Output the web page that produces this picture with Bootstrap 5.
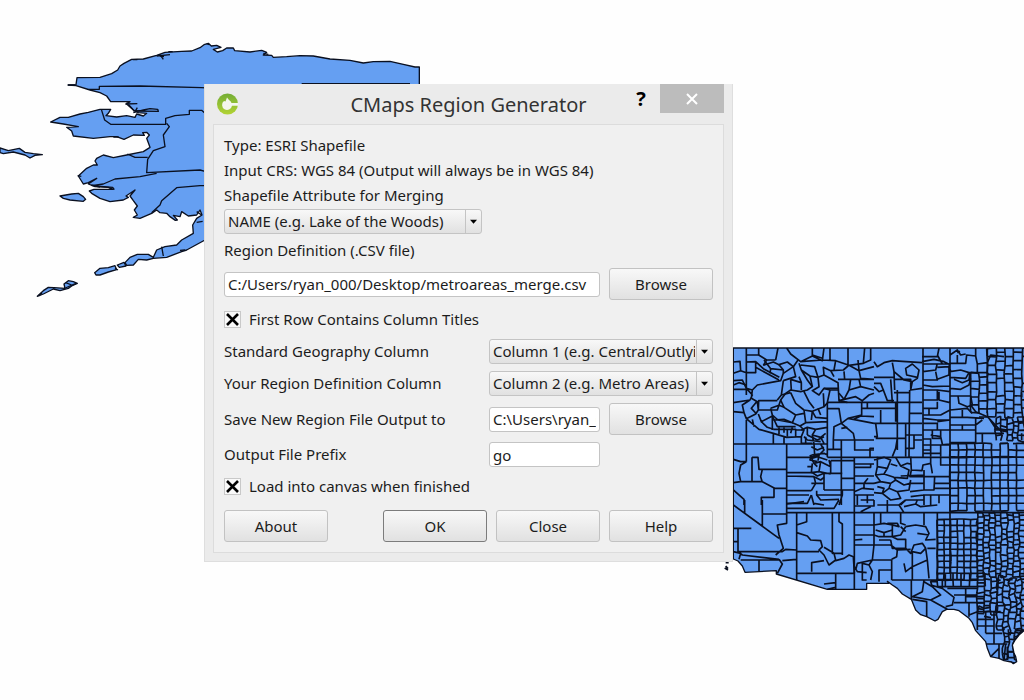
<!DOCTYPE html>
<html lang="en">
<head>
<meta charset="utf-8">
<meta name="viewport" content="width=device-width, initial-scale=1">
<title>CMaps Region Generator</title>
<link href="https://cdn.jsdelivr.net/npm/bootstrap@5.3.0/dist/css/bootstrap.min.css" rel="stylesheet">
<style>
  body { font: 15px/25px "Noto Sans", sans-serif; color: #1c1c1c; background: #fefefe; }
  .desktop { min-height: 100vh; }
  .map-canvas { inset: 0; width: 100%; height: 100%; }
  .map-canvas path { stroke: #0a1020; stroke-width: 4; stroke-linejoin: round; }
  .map-canvas .inland path { stroke-width: 5; }
  .land { fill: #659ff2; }
  .borders path { fill: none; }
  .dialog-window { left: 204px; top: 84px; width: 529px; padding: 0 8px 8px; background: #ebebeb; border: 1px solid #dedede; border-top: 0; }
  .title-side { width: 112px; }
  .title-bar { height: 40px; }
  .title-bar h1 { font: 20px/42px "Noto Sans", sans-serif; color: #333; }
  .help-btn { width: 38px; height: 29px; background: none; border: 0; font: bold 20px/29px "Noto Sans", sans-serif; }
  .close-btn { width: 64px; height: 29px; background: #bcbcbc; border: 0; }
  .dialog-panel { padding: 8px 10px 10px; background: #f0f0f0; border: 1px solid #dcdcdc; }
  .form-rows { display: grid; grid-template-columns: minmax(0, 1fr) 111px 104px; gap: 7px 9px; align-items: center; margin-top: 5px; }
  .span-2 { grid-column: span 2; }
  .span-3 { grid-column: 1 / -1; }
  .button-set { gap: 9px; }
  .btn-qt { width: 104px; height: 32px; padding: 0; font-size: 15px; line-height: 30px; color: #1c1c1c; border: 1px solid #c2c2c2; border-radius: 3px; background: linear-gradient(#f8f8f8, #e1e1e1); }
  .btn-qt.is-default { border-color: #7c7c7c; }
  .field { height: 25px; padding: 0 3px; font-size: 15px; line-height: 23px; color: #1c1c1c; border: 1px solid #c4c4c4; border-radius: 3px; min-height: 0; }
  select.field { padding-right: 17px; background: url("data:image/svg+xml,%3Csvg xmlns='http://www.w3.org/2000/svg' width='16' height='24'%3E%3Cpath d='M.5 0v24' stroke='%23c4c4c4'/%3E%3Cpath d='M5 10h7l-3.500 4z' fill='%23000'/%3E%3C/svg%3E") right center no-repeat, linear-gradient(#f8f8f8, #e1e1e1); }
  .attribute-select { width: 258px; margin: 1px 0 4px; }
  .tick { appearance: none; width: 17px; height: 17px; border: 1px solid #c9c9c9; background: #f9f9f9; }
  .tick:checked { background: #f9f9f9 url("data:image/svg+xml,%3Csvg xmlns='http://www.w3.org/2000/svg' viewBox='0 0 15 15'%3E%3Cpath d='M2 2l11 11M13 2L2 13' stroke='%23000' stroke-width='2.600'/%3E%3C/svg%3E"); }
</style>
</head>
<body>
<main class="desktop position-relative overflow-hidden">
  <svg class="map-canvas position-absolute" viewBox="0 0 1024 700" preserveAspectRatio="xMinYMin slice" aria-hidden="true">
    <defs>
      <path id="states" d="M28,24H910V868L900,872 885,885 872,902 865,915 870,940 875,950 878,965 868,971 862,966 840,962 825,955 800,950 790,925 785,905 755,872 745,848 735,835 705,812 690,808 668,808 655,815 642,838 633,843 608,830 590,824 575,810 562,778 535,762 520,745 505,735 490,724 495,730 428,730V748H310L157,702V692L63,697 55,678 42,663 28,657Z"/>
      <clipPath id="states-clip"><use href="#states"/></clipPath>
    </defs>
    <!-- Alaska -->
    <g transform="translate(0 30) scale(.333333)">
      <path class="land" d="M204,165L228,164 231,143 300,142 335,131 353,120 360,108 372,100 395,88 430,87 470,76 495,67 545,64 575,63 600,53 612,44 625,40 634,48 650,46 663,52 640,58 652,66 668,62 680,54 700,54 704,62 750,66 785,61 800,67 790,75 815,76 820,82 860,80 900,77 940,78 990,87 1050,91 1090,99 1120,95 1170,94 1210,103 1245,111 1258,111V170H700V600L615,630 560,660 545,665 500,682 460,685 440,690 415,688 400,705 380,706 375,698 390,682 412,673 445,673 460,682 470,660 495,650 530,645 545,630 580,610 578,585 590,565 606,555 600,540 590,555 565,558 545,545 540,560 520,556 532,570 526,571 510,560 500,550 480,548 470,540 455,550 420,565 400,562 412,555 403,540 412,528 400,512 390,498 405,480 378,498 385,502 370,510 330,515 300,505 275,490 268,483 282,478 340,478 325,472 285,470 265,462 290,445 265,458 250,462 235,438 260,415 280,405 292,405 285,393 290,385 310,375 340,383 380,375 430,365 450,352 440,325 448,315 440,307 428,308 433,316 400,315 372,328 350,320 330,320 280,325 220,318 215,303 200,292 235,290 190,282 152,276 180,262 205,262 240,252 265,247 300,238 332,238 325,250 318,257 350,261 380,257 405,262 410,252 430,258 440,250 415,248 400,240 380,222 390,215 332,215 320,198 300,188 270,180 228,167Z"/>
      <path class="land" d="M0,354L25,362 58,355 75,367 100,371 127,374 105,376 90,384 75,375 40,366 10,371 0,368ZM180,498L215,492 235,490 250,500 257,508 250,514 210,510 190,505ZM284,728L300,715 325,713 345,707 350,719 325,726 300,735 288,735ZM352,705L372,697 378,708 358,712ZM112,799L130,782 145,772 162,773 195,775 192,762 205,752 220,755 232,760 215,768 205,775 180,782 160,777 130,792Z"/>
      <g class="borders">
        <path d="M204,165H225M266,178H298V169L420,168 605,173 640,175M304,238L314,270 332,283H497V265L525,257 568,253V241H605L615,250M500,280L508,290 490,315 495,350 460,362 443,388 440,428 600,420 615,424M443,382H405L382,372M275,467L310,462 345,447 420,440 470,430M455,548L480,525 485,512 530,473 600,467H620M485,650L490,678M470,78L510,74M480,74L490,88M376,222L412,221M380,217L405,245 412,233M400,248L430,240 450,236 473,238 475,244 400,243M285,468L338,472 343,479M590,577L608,574M905,161H1230"/>
        <path stroke-width="7" d="M340,321H356M398,89H412M480,78L492,80M505,65H518M405,243L420,242M196,774L228,760M345,715L354,720M540,661L555,660M233,437L244,439M274,465L300,471M620,41L628,44M790,70L805,73M590,545L605,555M116,797L126,789M197,758L215,765"/>
      </g>
    </g>
    <!-- Lower 48 -->
    <g class="inland" transform="translate(724 340) scale(.333333)">
      <use class="land" href="#states"/>
      <path fill="none" d="M5,668L14,668M5,678L12,686M2,684L12,690"/>
      <g class="borders" clip-path="url(#states-clip)">
        <path d="M67,24V165M28,66L48,64 50,92 67,98M67,45H104V24M67,66L95,65 118,86 166,112M67,98H95V64M95,82L165,120M28,122L55,120 67,145 85,150 100,135 170,122 178,100 208,80 190,66 165,74 148,66 118,76M162,24L155,60M188,24L200,42 230,65 265,48 295,62 300,24M230,65L295,60 335,62 375,76 418,70 422,24M318,24V60M265,24V45L295,55M372,24V78L358,90 320,92M375,76L405,92 410,115 450,118M405,92L450,80M28,148H70L85,165 78,180 28,188M85,150L82,175 100,185 103,210H160L170,180 185,160 200,150 230,155 250,150 265,140 250,120 232,90 225,70M178,122L172,165 160,180M200,118L202,150M200,118L232,128V150M103,210L104,182H160M208,80L215,110 178,122M232,90L258,108 282,112 272,80 230,75M282,112L300,105 342,128 345,182 360,178 375,150 380,118H450M342,118H380M320,92L330,110M360,94L362,118M375,150L410,140 450,150M410,140L405,118M300,105L298,82 320,92M282,112L285,140 265,152 285,165 300,145H342M345,182L395,170 415,182 435,165 450,160M28,215L60,218 67,236 95,222 103,210M60,218L55,195 78,180M98,185L82,205 98,222M67,236L105,268 148,280 188,292 232,290 240,270 228,258 245,248 310,245M67,240V365M140,205L145,225 162,240 205,248 215,225 240,220M140,205L165,196 180,202 215,225M200,158L215,190 240,210 265,214 300,200 298,160M240,155L255,185 270,205M103,222L112,245 145,228V270M85,238L90,260M148,268H215V290M148,280V312M165,262V282M180,262V278M205,262L200,280M148,240L180,238 205,248M180,310V292M232,290V310H265M240,210L245,248M265,214L275,232 310,235M28,312H310M310,187V352M310,187H594M310,205L345,206 352,250 330,260 328,300H450M328,300V328H352M352,300V495M413,187V225L372,235 352,250 388,280 392,300M372,235L450,250M390,238L410,228 450,230M310,328H328M310,352H680M438,352V325H450M188,312V520M188,352H258L285,345 300,330 290,312M28,358L50,365 67,365M67,365L50,375 45,400 50,425 28,428M50,425H115L152,445H188M84,352V427M84,352H102L105,388H188M115,388L110,410 115,427M188,398H265L280,408 300,400H355M188,408L270,410M188,452H262M188,465H255M258,345L270,370 290,365 320,380 315,360M265,370L262,398M290,365L285,395 320,402M320,362H391M320,362V400M391,352V748M352,415H391M300,402V450M300,450H391M262,452L275,430 270,410M278,452V465H355V450M275,430H300M391,372H450M391,382H440V372M391,408H450M391,430H420L432,415M391,455L415,445 450,448M391,465H450M420,445V430H450M28,450L60,478V495M112,495V472H150V445M188,490H250L262,465M355,465L345,495M400,495V465M410,480H450M430,465V490M232,270L250,262 275,268 265,285 290,292 305,280M250,262V285M275,268L310,262M265,285L270,312M240,290L250,300 290,305M290,292L300,310M262,345L300,340 310,345M265,355L280,350 310,360M270,370L280,380"/>
        <path d="M104,45L128,60 155,60M128,60L118,76M208,80L222,60M28,100L50,92M28,135L45,128 67,135M172,165L200,158M180,202L170,180M225,110L232,128M258,108L265,140M335,62L330,90M300,145L318,150 310,187M318,150L342,150M360,178L345,160M120,60L140,86 178,90M140,86L138,100M165,74L178,90 178,100M282,205L290,225M265,214L262,240M300,200L312,187M112,245L130,262 148,268M145,228L160,260H215M190,268V290M205,248L228,258M215,270L240,270M245,290V312M250,285L280,300 300,290M262,320L280,330 300,322M270,312L272,345M262,345L258,360 280,365M285,345L282,362M250,380H265M262,398L285,395M270,410L290,420 300,412M262,430H275M262,465L270,495M278,465L290,480 345,478M270,490L300,495M392,300V330H450M413,205H450M430,205V187M352,265L370,262M345,182L370,187M418,70L440,60V24M405,92L402,60"/>
        <path d="M597,24V352M520,150V330M557,150L555,352M594,65L630,58 660,65 680,75M450,65L460,80 480,68 505,62 535,64 594,68M505,68L510,95 540,120 565,125 580,115 585,90 565,72 545,85 548,105 580,112M510,95L512,150M512,118H560V150M510,158H555M565,125L560,150 594,145M450,112H510M450,130L470,130 478,150 465,155 450,140M478,150L490,182H510M500,118L505,187M450,205H515M470,210V250H450M450,250H594M515,187V245M557,220H594M455,250L460,290H450M455,295H545M520,250V295L515,325 505,350M545,250V350M545,285H594M570,285V325H545M570,300H594M594,50H640L645,24M640,45L655,72H675L680,95M597,72H655M597,95L635,90 640,70M597,120H640L635,95M640,82L675,80V105L640,118M597,135L625,140 678,138M597,150H640L678,155M597,180H640V150M597,205H640V185M645,155V180L678,188M678,24V700M597,225H650L678,210M615,205V225M597,235L640,240H678M597,250H640V270M640,245L678,240M597,270H678M625,270V295H650V270M597,297H620V350M597,315H678M620,285L650,290 655,312M650,315V350M597,340H650M597,330H620M645,315L678,312M678,45L700,30 710,45 725,42M678,70H725L728,45 755,48V24M700,45V70M755,48L760,72 790,68M678,95L710,90 735,98 725,115 680,112M690,118L715,128 735,120 738,98M678,145L710,148 735,135 740,115M678,168H740L745,195 730,200 705,190 702,168M740,195L755,215 790,230 830,272 850,275M678,210L730,205 745,220M678,232H730L780,235M715,205V235M678,255H755L775,240M755,235V275M678,270H755V308H678M715,255V268M755,280H840M775,280V308M795,235L815,265 850,270M790,68L800,45 840,50M790,24V50M735,98H790V68M760,72V98M450,360L480,352 500,360 490,385 460,380V350M460,380L455,405 480,402 510,412 550,415 555,390 530,378 515,352M455,405L470,425 500,430 495,445 520,455 555,450 560,420M450,430L470,425M495,445L475,460 450,458M520,455L530,475 500,480 475,460M560,350L562,390 594,392 597,375 620,370V352M562,390L558,410H680M530,408L600,405M555,430H600V450L558,455M600,450H630L632,410M560,470L600,465V495M600,390V440M620,370L625,400M650,352V375H680M632,430H680M632,445H680M597,465H680M620,465V495M645,465V490M545,480H600M530,495L545,480M480,402L490,385M500,430L515,420 510,412M515,420L540,435 558,430M460,440L480,445 475,460M520,378L500,372M530,378L550,370 560,372"/>
        <g transform="translate(0 480)">
          <path d="M188,38H900M640,38V240M188,38V70L160,75 165,105 178,145 155,165M28,15L165,115M115,0V78M115,42H188M62,0V38M28,85H82M42,85V155H175L185,148 218,150M28,125H42M28,155L50,160 45,178M50,180H165M42,155L55,165 165,178M105,182V213M165,178L175,192 160,220M175,182L218,178M218,40V240M218,75L248,65V38M218,98L250,108 260,120 290,122 295,140 285,150 300,165 315,195 335,180 330,160 300,142M218,155H285M218,220H335V268M263,215V188L300,182M335,220H391M335,182L360,175 375,165 388,170 391,220M355,165V72L345,65V38M325,38V160H355M188,25H330L345,0M188,12L240,5M300,252L335,248M310,268L335,262M391,75H450M391,105H450L465,110H505M391,120L415,118M391,135H450V38M450,75L480,70 505,75 525,80 520,70 490,70M505,75V110L520,118H545V145L505,145 500,120M450,135H500L520,150 518,170 503,178M450,135L445,180 400,190 395,210M445,180L435,195 415,190V240H428M391,200L400,215 428,218M435,195L445,215 440,240M445,180H503V240M503,210H465V245M545,80L575,75 605,80 615,100 605,120 635,118M545,80L530,105 505,110M580,100L615,105M600,38V75M530,38V70L545,75M545,145L560,160 570,135 595,130 605,145 590,160 565,155V240M520,150L560,148M605,145L610,180 565,200M635,145H610M610,180L615,235M565,200L545,215 540,190M503,240H640M562,240V298M600,240L595,275 565,290 620,300 670,328M565,298L608,305V350M600,245L625,260 650,285 620,300M620,255L655,265 690,292 685,315 665,320M625,260L620,245H640M655,265V240M670,265H760M690,285H760M690,308H725V265M725,290H780M725,308H780M735,308V350M735,345L760,335 765,318 780,325 800,322M760,335V390M785,335V400M810,335V360M760,358H810M760,378H810M760,335H830M810,360V430M785,400H835M785,432H850M825,432V480M800,470L825,445M845,432L840,480M850,455H870M850,440V480M391,18H450V0M410,35L440,20M460,15H525L540,38M490,0V35M525,15L545,0M540,20L575,12 590,20 640,15M575,12L580,0M470,38V70M455,90L480,98 505,90M480,98V110M465,120H500M545,95L530,80"/>
        </g>
        <path id="counties"/>
        <path d="M902,868L884,886 866,920 873,950M893,160V172M893,280V300M700,38L708,34M897,868L880,888 866,912"/>
      </g>
    </g>
  </svg>

  <section class="dialog-window position-absolute" role="dialog" aria-labelledby="dialog-title">
    <header class="title-bar d-flex">
      <div class="title-side d-flex align-items-center ps-1">
        <svg width="21" height="22" viewBox="0 0 21 22" aria-hidden="true">
          <defs><linearGradient id="leaf" x2="0" y2="1"><stop stop-color="#74ad35"/><stop offset="1" stop-color="#b2d334"/></linearGradient></defs>
          <circle cx="10.500" cy="11" r="10.500" fill="url(#leaf)"/>
          <path fill="#f4f6ec" d="M10,4.500L12,7A5,5 0 0 1 14.500,10H21V12.800H15A5,5 0 1 1 7,8L8.500,8.500Z"/>
        </svg>
      </div>
      <h1 id="dialog-title" class="flex-grow-1 text-center m-0 text-nowrap">CMaps Region Generator</h1>
      <div class="title-side d-flex align-items-start justify-content-end">
        <button type="button" class="help-btn p-0">?</button>
        <button type="button" class="close-btn p-0" aria-label="Close window"><svg width="12" height="12" viewBox="0 0 12 12" class="d-block mx-auto"><path d="M1 1l10 10M11 1L1 11" stroke="#fff" stroke-width="2"/></svg></button>
      </div>
    </header>
    <form class="dialog-panel" onsubmit="return false">
      <div>Type: ESRI Shapefile</div>
      <div>Input CRS: WGS 84 (Output will always be in WGS 84)</div>
      <label class="d-block" for="attribute">Shapefile Attribute for Merging</label>
      <select id="attribute" class="form-select field attribute-select"><option>NAME (e.g. Lake of the Woods)</option></select>
      <label class="d-block" for="definition">Region Definition (.CSV file)</label>
      <div class="form-rows">
        <input id="definition" class="form-control field span-2" value="C:/Users/ryan_000/Desktop/metroareas_merge.csv">
        <button type="button" class="btn btn-qt">Browse</button>
        <div class="span-3 d-flex align-items-center gap-2"><input type="checkbox" class="tick" id="titles" checked><label for="titles">First Row Contains Column Titles</label></div>
        <label for="geography">Standard Geography Column</label>
        <select id="geography" class="form-select field span-2"><option>Column 1 (e.g. Central/Outlying County)</option></select>
        <label for="region">Your Region Definition Column</label>
        <select id="region" class="form-select field span-2"><option>Column 2 (e.g. Metro Areas)</option></select>
        <label for="output">Save New Region File Output to</label>
        <input id="output" class="form-control field" value="C:\Users\ryan_000\Desktop">
        <button type="button" class="btn btn-qt">Browse</button>
        <label for="prefix">Output File Prefix</label>
        <input id="prefix" class="form-control field" value="go">
        <div class="span-3 d-flex align-items-center gap-2"><input type="checkbox" class="tick" id="load" checked><label for="load">Load into canvas when finished</label></div>
        <div class="span-3 d-flex mt-1">
          <button type="button" class="btn btn-qt me-auto">About</button>
          <div class="d-flex button-set">
            <button type="submit" class="btn btn-qt is-default">OK</button>
            <button type="button" class="btn btn-qt">Close</button>
            <button type="button" class="btn btn-qt">Help</button>
          </div>
        </div>
      </div>
    </form>
  </section>
</main>
<script src="https://cdn.jsdelivr.net/npm/bootstrap@5.3.0/dist/js/bootstrap.bundle.min.js"></script>
<script>
  // County lines: blocks of [x, y, columns, rows, cell width, cell height, irregularity].
  const blocks = [
    [790, 24, 5, 8, 26, 26, 2], [740, 98, 2, 5, 25, 24, 2], [815, 232, 6, 4, 17, 18, 3],
    [678, 310, 9, 2, 25, 20, 1], [678, 352, 9, 7, 25, 23, 1],
    [640, 538, 6, 10, 20, 18, 1], [640, 700, 6, 2, 24, 20, 1], [760, 518, 8, 12, 18, 16, 3],
    [760, 710, 3, 7, 20, 16, 3], [820, 710, 5, 9, 18, 18, 5], [838, 870, 3, 5, 17, 18, 4]
  ];
  let seed = 7;
  const random = () => (seed = seed * 16807 % 2147483647) / 2147483647 - 0.5;
  let d = "";
  for (const [x, y, columns, rows, w, h, wobble] of blocks) {
    const point = [];
    for (let c = 0; c <= columns; c++) {
      point[c] = [];
      for (let r = 0; r <= rows; r++) {
        point[c][r] = [Math.round(x + c * w + random() * wobble * 2), Math.round(y + r * h + random() * wobble * 2)];
      }
    }
    for (let c = 0; c <= columns; c++) {
      const stagger = wobble > 1 && c % 2 ? h / 2 : 0;
      for (let r = 0; r <= rows; r++) {
        if (r < rows) d += "M" + point[c][r] + "L" + point[c][r + 1];
        if (c < columns && random() < 0.42) {
          const [x1, y1] = point[c][r], [x2, y2] = point[c + 1][r];
          d += "M" + [x1, y1 + stagger] + "L" + [x2, y2 + stagger];
        }
      }
    }
  }
  document.getElementById("counties").setAttribute("d", d);
</script>
</body>
</html>
